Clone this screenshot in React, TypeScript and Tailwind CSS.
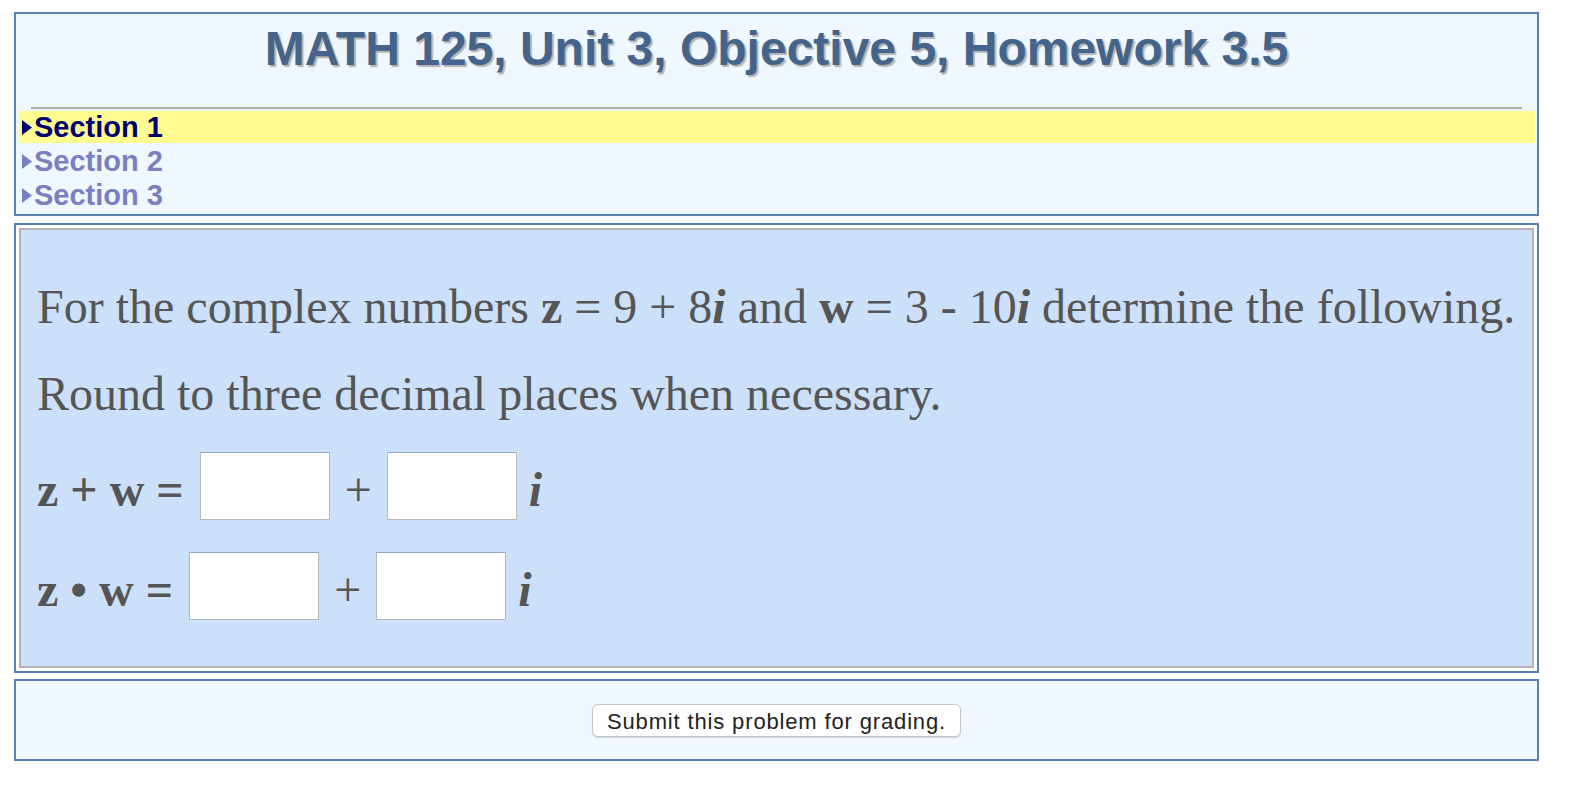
import React from 'react';

const sections = ['Section 1', 'Section 2', 'Section 3'];

const Arrow: React.FC<{ active: boolean }> = ({ active }) => (
  <svg width="10" height="15" viewBox="0 0 10 15" className="shrink-0 w-[10px] h-[15px]">
    <polygon points="0,0 10,7.5 0,15" fill={active ? '#00006e' : '#7a7fc0'} />
  </svg>
);

const AnswerBox: React.FC = () => (
  <input
    type="text"
    className="w-[130px] h-[68px] bg-white border border-[#b8b8b8] border-t-[#94a7c3] outline-none"
  />
);

const AnswerRow: React.FC<{ label: React.ReactNode }> = ({ label }) => (
  <div className="flex items-center h-[68px]">
    <span className="font-bold translate-y-[3px] mr-[16px]">{label}</span>
    <AnswerBox />
    <span className="mx-[15px] translate-y-[3px]">+</span>
    <AnswerBox />
    <span className="ml-[12px] font-bold italic translate-y-[3px]">i</span>
  </div>
);

export default function App() {
  return (
    <div className="min-h-screen bg-white pt-[12px] pl-[14px]">
      {/* header with section list */}
      <div className="w-[1525px] border-2 border-[#5782b3] bg-[#eff7ff] pt-[8px] pb-[3px]">
        <h1 className="text-center font-['Liberation_Sans',Arial,sans-serif] font-bold text-[48px] leading-[54px] text-[#44648b] [text-shadow:2px_2px_1px_#b3b3b3]">
          MATH 125, Unit 3, Objective 5, Homework 3.5
        </h1>
        <div className="mt-[31px] mx-[15px] h-[2px] bg-[#b0b0b0]" />
        <div className="mt-[2px] flex flex-col gap-[2px] font-['Liberation_Sans',Arial,sans-serif] font-bold text-[29px] leading-[32px]">
          {sections.map((s, i) => (
            <div
              key={s}
              className={
                i === 0
                  ? 'ml-[3px] mr-[2px] h-[32px] pl-[3px] flex items-center gap-[2px] bg-[#fffb91] text-[#00006e]'
                  : 'ml-[3px] mr-[2px] h-[32px] pl-[3px] flex items-center gap-[2px] text-[#7a7fc0]'
              }
            >
              <Arrow active={i === 0} />
              <span>{s}</span>
            </div>
          ))}
        </div>
      </div>

      {/* problem */}
      <div className="mt-[7px] w-[1525px] border-2 border-[#5782b3] bg-white p-[3px]">
        <div className="border-2 border-[#b4b4b4] bg-[#cce0fa] pl-[16px] pt-[49px] pb-[46px] font-['Liberation_Serif','Times_New_Roman',serif] text-[48px] leading-[55px] text-[#555555]">
          <p>
            For the complex numbers <b>z</b> = 9 + 8<b><i>i</i></b> and <b>w</b> = 3 - 10
            <b><i>i</i></b> determine the following.
          </p>
          <p className="mt-[32px]">Round to three decimal places when necessary.</p>
          <div className="mt-[31px]">
            <AnswerRow label={<>z + w =</>} />
          </div>
          <div className="mt-[32px]">
            <AnswerRow label={<>z &bull; w =</>} />
          </div>
        </div>
      </div>

      {/* submit */}
      <div className="mt-[6px] w-[1525px] h-[82px] border-2 border-[#5782b3] bg-[#f0f7fe] flex items-center justify-center">
        <button
          type="button"
          className="h-[33px] px-[14px] rounded-[6px] bg-white border border-[#c6c6c6] shadow-[0_1px_1px_rgba(0,0,0,0.15)] font-['Liberation_Sans',Arial,sans-serif] text-[22px] tracking-[0.85px] text-[#222222]"
        >
          Submit this problem for grading.
        </button>
      </div>
    </div>
  );
}
